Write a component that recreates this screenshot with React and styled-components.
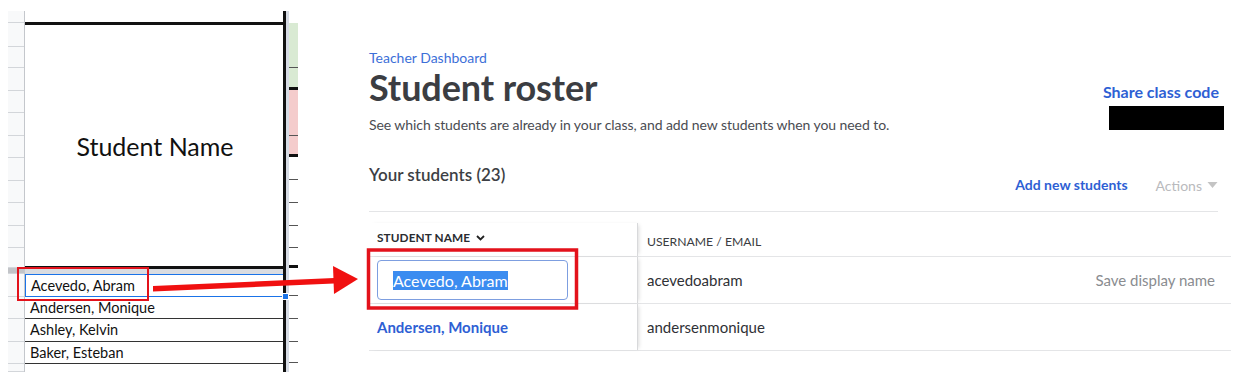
import React from 'react'
import styled, { createGlobalStyle } from 'styled-components'

const GlobalStyle = createGlobalStyle`
  body {
    margin: 0;
    background: #fff;
  }
  * {
    box-sizing: border-box;
  }
`

// spreadsheet data

const students = ['Acevedo, Abram', 'Andersen, Monique', 'Ashley, Kelvin', 'Baker, Esteban']

const rowHeaderCells = [
  12, 24, 21, 23, 22, 23, 22, 23, 22, 23, 22, 20, 6, 23, 22, 23, 22, 8,
]

const sideCells = [
  { h: 12 },
  { h: 45, fill: '#d9ead3' },
  { h: 22, fill: '#d9ead3', thick: true },
  { h: 46, fill: '#f4cccc' },
  { h: 21, fill: '#f4cccc', thick: true },
  { h: 23 },
  { h: 23 },
  { h: 23 },
  { h: 22 },
  { h: 20, thick: true },
  { h: 28 },
  { h: 23 },
  { h: 23 },
  { h: 21 },
  { h: 9, none: true },
]

const rosterRows = [
  { name: 'Acevedo, Abram', user: 'acevedoabram', editing: true },
  { name: 'Andersen, Monique', user: 'andersenmonique' },
]

const App = () => {
  return (
    <>
      <GlobalStyle />
      <Frame>
        {/* spreadsheet crop */}
        <Sheet>
          <RowHeaders>
            {rowHeaderCells.map((h, index) => (
              <RowHeaderCell key={index} style={{ height: h }} $band={index === 12} />
            ))}
          </RowHeaders>

          <MainColumn>
            <TopGap />
            <MergedCell>Student Name</MergedCell>
            <FreezeBand />
            {students.map((name, index) => (
              <SheetRow key={name} $selected={index === 0}>
                {name}
                {index === 0 ? <FillHandle /> : null}
              </SheetRow>
            ))}
          </MainColumn>

          <ThickRule />
          <ColumnGap />

          <SideColumn>
            {sideCells.map((cell, index) => (
              <SideCell
                key={index}
                style={{ height: cell.h, backgroundColor: cell.fill || '#fff' }}
                $thick={cell.thick}
                $none={cell.none || index === 0}
              />
            ))}
          </SideColumn>
        </Sheet>

        {/* roster page */}
        <Roster>
          <PageHeader>
            <div>
              <Crumb>Teacher Dashboard</Crumb>
              <Title>Student roster</Title>
              <Lead>See which students are already in your class, and add new students when you need to.</Lead>
            </div>
            <ShareBlock>
              <ShareLink>Share class code</ShareLink>
              <Redacted />
            </ShareBlock>
          </PageHeader>

          <Toolbar>
            <Count>Your students (23)</Count>
            <ToolbarActions>
              <AddLink>Add new students</AddLink>
              <Actions>
                Actions
                <Caret viewBox="0 0 10 6">
                  <path d="M0 0h10L5 6z" fill="#c4c4c4" />
                </Caret>
              </Actions>
            </ToolbarActions>
          </Toolbar>

          <Table>
            <HeadRow>
              <NameHead>
                STUDENT NAME
                <svg width="9" height="6" viewBox="0 0 9 6">
                  <path d="M1 1l3.5 3.5L8 1" fill="none" stroke="#222" strokeWidth="1.8" />
                </svg>
              </NameHead>
              <UserHead>USERNAME / EMAIL</UserHead>
            </HeadRow>
            {rosterRows.map((row) => (
              <BodyRow key={row.user}>
                <NameCell>
                  {row.editing ? (
                    <EditBox>
                      <Selected>{row.name}</Selected>
                    </EditBox>
                  ) : (
                    <NameLink>{row.name}</NameLink>
                  )}
                </NameCell>
                <UserCell>
                  {row.user}
                  {row.editing ? <SaveLabel>Save display name</SaveLabel> : null}
                </UserCell>
              </BodyRow>
            ))}
          </Table>
        </Roster>

        {/* red annotations on top */}
        <Annotations viewBox="0 0 1247 381">
          <rect x="18" y="268" width="130" height="32" fill="none" stroke="#e3121b" strokeWidth="2" />
          <rect x="368.5" y="250" width="208" height="58" fill="none" stroke="#e3121b" strokeWidth="3.5" />
          <polygon points="153,286 334,278 334,283.5 153,291.5" fill="#f01010" />
          <polygon points="333,266 358,279 334,294" fill="#f01010" />
        </Annotations>
      </Frame>
    </>
  )
}

const Frame = styled.div`
  position: relative;
  width: 1247px;
  height: 381px;
  display: flex;
  overflow: hidden;
  background: #fff;
`

const Sheet = styled.div`
  width: 300px;
  flex-shrink: 0;
  display: flex;
  padding: 11px 0 0 8px;
  height: 372px;
  font-family: Lato, 'Open Sans', sans-serif;
`

const RowHeaders = styled.div`
  width: 17px;
  display: flex;
  flex-direction: column;
  background: #f8f9fa;
  border-right: 1px solid #c4c7cc;
`

const RowHeaderCell = styled.div`
  flex-shrink: 0;
  border-bottom: 1px solid #d3d6da;
  background: ${({ $band }) => ($band ? '#c2c4c8' : 'transparent')};
`

const MainColumn = styled.div`
  width: 258px;
  display: flex;
  flex-direction: column;
`

const TopGap = styled.div`
  height: 11px;
`

const MergedCell = styled.div`
  height: 247px;
  border-top: 3px solid #111;
  border-bottom: 3px solid #111;
  display: flex;
  align-items: center;
  justify-content: center;
  padding-left: 2px;
  font-size: 25px;
  color: #111;
`

const FreezeBand = styled.div`
  height: 5px;
  background: #dadce0;
`

const SheetRow = styled.div`
  position: relative;
  height: 22.5px;
  display: flex;
  align-items: center;
  padding-left: 5px;
  font-size: 14.5px;
  color: #111;
  border-bottom: 1px solid #333;
  ${({ $selected }) =>
    $selected &&
    `
    border: 1.5px solid #1a73e8;
    border-right: none;
  `}
`

const FillHandle = styled.span`
  position: absolute;
  right: -6px;
  bottom: -4px;
  width: 7px;
  height: 7px;
  background: #1a73e8;
  border: 1px solid #fff;
  z-index: 2;
`

const ThickRule = styled.div`
  width: 3px;
  background: #111;
`

const ColumnGap = styled.div`
  width: 3px;
  background: #d6dbe4;
`

const SideColumn = styled.div`
  width: 9px;
  display: flex;
  flex-direction: column;
`

const SideCell = styled.div`
  flex-shrink: 0;
  border-bottom: ${({ $thick, $none }) =>
    $none ? 'none' : $thick ? '3px solid #111' : '1px solid #555'};
`

const Roster = styled.div`
  flex: 1;
  padding: 48px 16px 0 69px;
  font-family: Lato, 'Open Sans', sans-serif;
  color: #21242c;
`

const PageHeader = styled.div`
  display: flex;
  justify-content: space-between;
  align-items: flex-start;
  padding-right: 7px;
`

const Crumb = styled.div`
  font-size: 14px;
  line-height: 20px;
  color: #3d6fd8;
`

const Title = styled.h1`
  margin: 0;
  font-size: 36px;
  line-height: 38px;
  font-weight: 700;
  color: #3b3d42;
  letter-spacing: -0.1px;
`

const Lead = styled.p`
  margin: 10px 0 0;
  font-size: 14px;
  line-height: 18px;
  letter-spacing: -0.07px;
  color: #4a4c52;
`

const ShareBlock = styled.div`
  margin-top: 34px;
  display: flex;
  flex-direction: column;
  align-items: flex-end;
  gap: 5px;
`

const ShareLink = styled.span`
  font-size: 16px;
  line-height: 19px;
  font-weight: 700;
  color: #2e5fd4;
  cursor: pointer;
  margin-right: 5px;
`

const AddLink = styled.span`
  font-size: 14px;
  line-height: 18px;
  font-weight: 700;
  color: #2e5fd4;
  cursor: pointer;
`

const Redacted = styled.div`
  width: 115px;
  height: 24px;
  background: #000;
`

const Toolbar = styled.div`
  margin-top: 30px;
  margin-right: 13px;
  display: flex;
  justify-content: space-between;
  align-items: flex-start;
  height: 48px;
  border-bottom: 1px solid #e4e5e7;
`

const Count = styled.div`
  font-size: 17px;
  line-height: 22px;
  font-weight: 600;
  color: #3d3f44;
`

const ToolbarActions = styled.div`
  margin-top: 12px;
  display: flex;
  align-items: center;
  gap: 28px;
`

const Actions = styled.span`
  display: flex;
  align-items: center;
  gap: 5px;
  font-size: 14px;
  color: #b9babd;
`

const Caret = styled.svg`
  width: 11px;
  height: 6px;
`

const Table = styled.div`
  margin-top: 11px;
`

const HeadRow = styled.div`
  display: grid;
  grid-template-columns: 269px 1fr;
  height: 34px;
  border-bottom: 1px solid #e4e5e7;
`

const NameHead = styled.div`
  display: flex;
  align-items: center;
  gap: 6px;
  padding: 0 8px 4px;
  font-size: 11.8px;
  font-weight: 700;
  color: #2a2c31;
  letter-spacing: 0.1px;
  border-right: 1px solid #d8d9db;
  box-shadow: 3px 0 4px -2px rgba(0, 0, 0, 0.14);
`

const UserHead = styled.div`
  display: flex;
  align-items: flex-end;
  padding: 0 9px 7px;
  font-size: 12.2px;
  color: #3a3c41;
`

const BodyRow = styled.div`
  display: grid;
  grid-template-columns: 269px 1fr;
  height: 47px;
  border-bottom: 1px solid #e4e5e7;
`

const NameCell = styled.div`
  display: flex;
  align-items: center;
  padding: 0 8px;
  border-right: 1px solid #d8d9db;
  box-shadow: 3px 0 4px -2px rgba(0, 0, 0, 0.14);
`

const EditBox = styled.div`
  width: 191px;
  height: 40px;
  border: 1px solid #7d9ee0;
  border-radius: 4px;
  display: flex;
  align-items: center;
  padding-left: 15px;
`

const Selected = styled.span`
  background: #3b8cf0;
  color: #fff;
  font-size: 16px;
  line-height: 19px;
`

const NameLink = styled.span`
  font-size: 15px;
  font-weight: 700;
  color: #2e5fd4;
`

const UserCell = styled.div`
  display: flex;
  align-items: center;
  justify-content: space-between;
  padding: 0 16px 0 9px;
  font-size: 15px;
  color: #2f3136;
`

const SaveLabel = styled.span`
  color: #8a8c90;
`

const Annotations = styled.svg`
  position: absolute;
  left: 0;
  top: 0;
  width: 1247px;
  height: 381px;
  pointer-events: none;
`

export default App
